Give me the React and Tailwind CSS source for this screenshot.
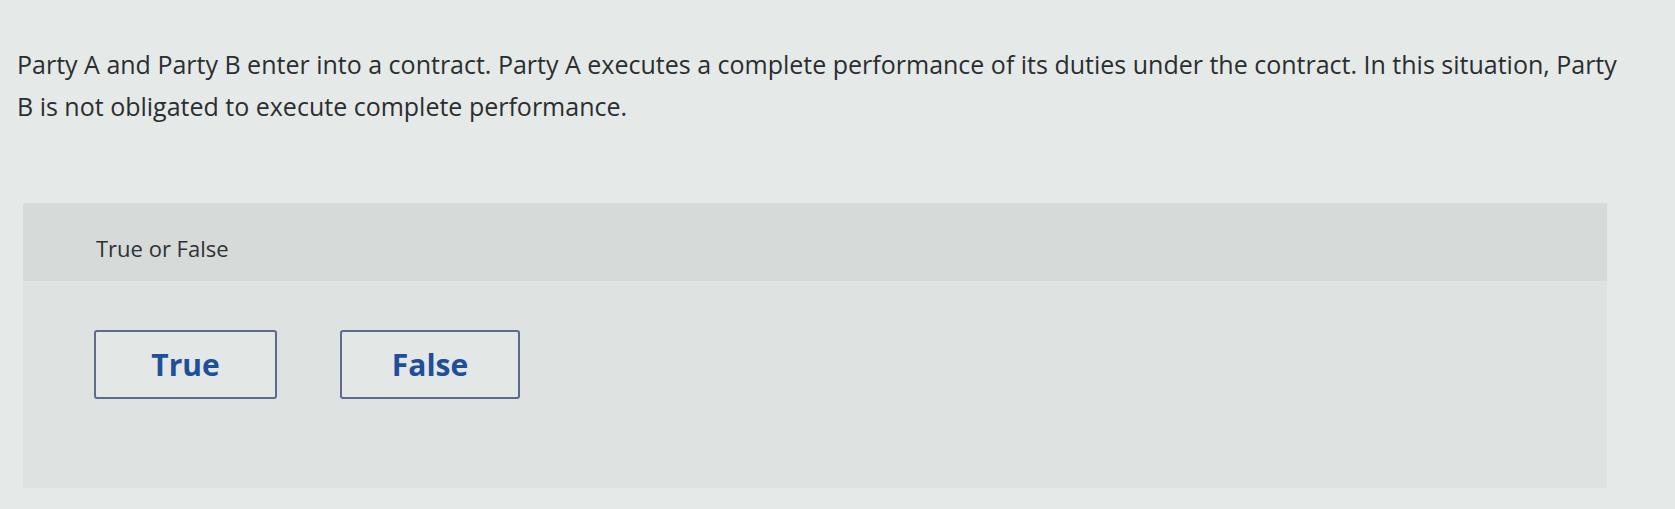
export default function App() {
  return (
    <div
      className="w-[1675px] h-[509px] overflow-hidden bg-[#e5e9e7] text-[#2b2e30]"
      style={{ fontFamily: "'Open Sans', Lato, sans-serif" }}
    >
      <div className="pl-[17px] pr-[40px] pt-[43px]">
        <p className="text-[25px] leading-[42px] max-w-[1608px]">
          Party A and Party B enter into a contract. Party A executes a complete performance of its duties under the
          contract. In this situation, Party B is not obligated to execute complete performance.
        </p>
      </div>

      <div className="ml-[23px] mr-[68px] mt-[76px] bg-[#dee2e0]">
        <div className="h-[78px] pl-[73px] pt-[31px] bg-[#d6dad8]">
          <span className="text-[22px] leading-[28px] text-[#2f3234]">True or False</span>
        </div>
        <div className="flex gap-[63px] pl-[71px] pt-[49px] pb-[89px]">
          <button className="w-[183px] h-[69px] rounded-[3px] border-2 border-[#5d6a92] bg-[#e3e7e5] text-[30px] font-bold text-[#1f4e9a]">
            True
          </button>
          <button className="w-[180px] h-[69px] rounded-[3px] border-2 border-[#5d6a92] bg-[#e3e7e5] text-[30px] font-bold text-[#1f4e9a]">
            False
          </button>
        </div>
      </div>
    </div>
  );
}
